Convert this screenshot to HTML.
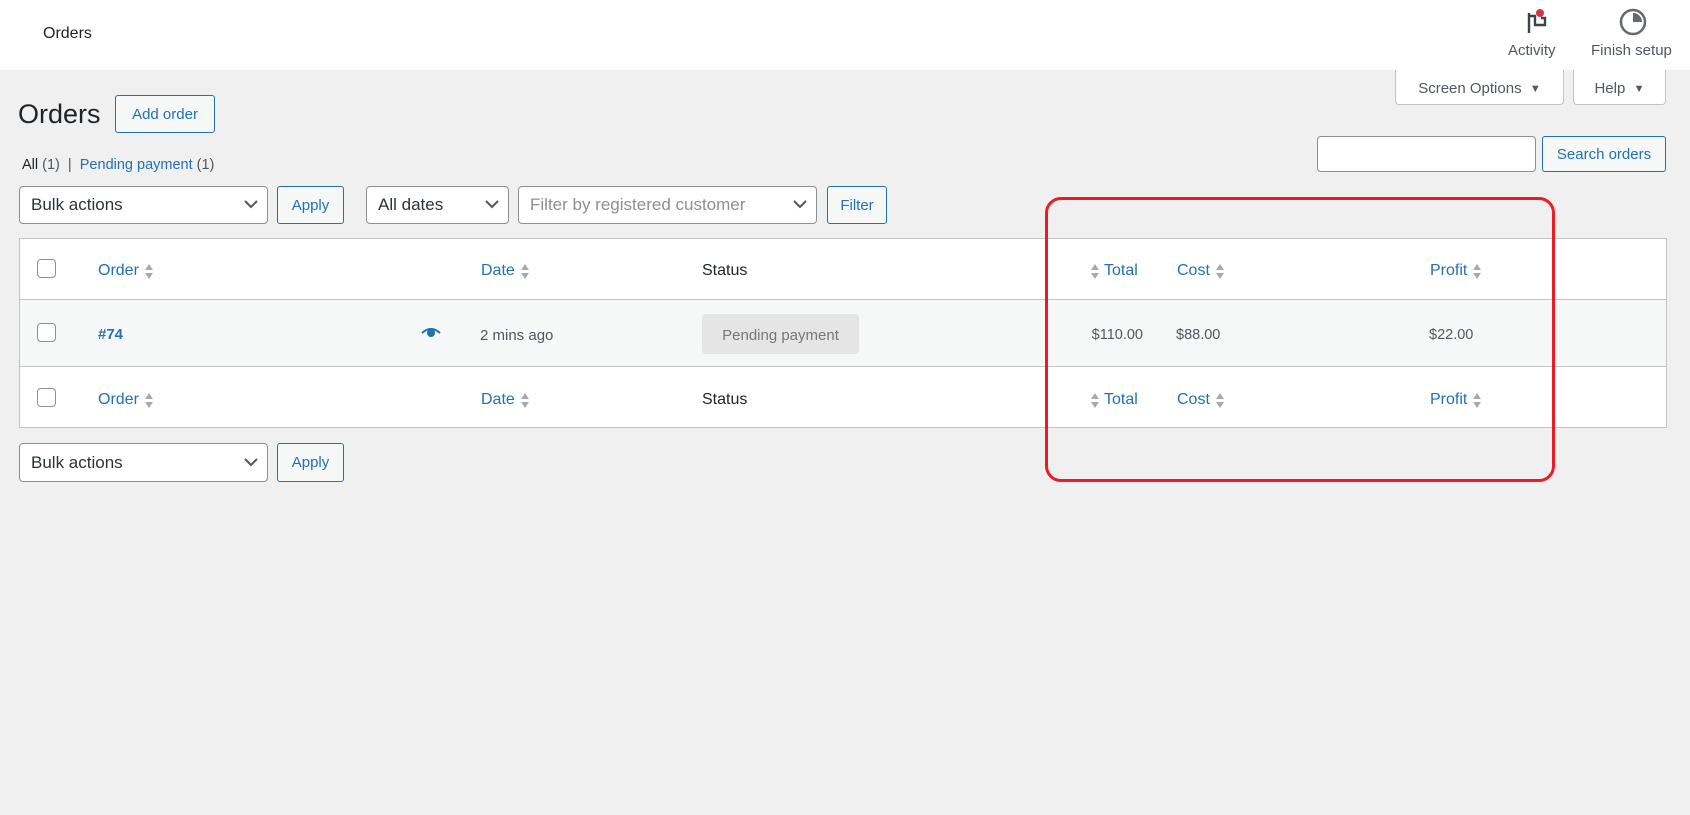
<!DOCTYPE html>
<html><head><meta charset="utf-8"><style>
*{box-sizing:border-box;margin:0;padding:0}
body{width:1690px;height:815px;background:#f0f0f1;font-family:"Liberation Sans",sans-serif;color:#1d2327;font-size:14px;position:relative;overflow:hidden}
.a{position:absolute}
.hdr{left:0;top:0;width:1690px;height:70px;background:#fff}
.btn{position:absolute;border:1px solid #2271b1;color:#2271b1;background:#f6f7f7;border-radius:3px;display:flex;align-items:center;justify-content:center;font-size:15px}
.sel{position:absolute;border:1px solid #8c8f94;background:#fff;border-radius:4px;font-size:17px;display:flex;align-items:center;padding-left:11px;color:#2c3338}
.sel svg{position:absolute;right:9px;top:50%;margin-top:-5px}
.tab{position:absolute;background:#fff;border:1px solid #c3c4c7;border-top:none;border-radius:0 0 4px 4px;color:#50575e;font-size:15px;display:flex;align-items:center;justify-content:center;padding-top:3px}
.cb{position:absolute;width:19px;height:19px;border:1px solid #8c8f94;border-radius:4px;background:#fff}
.th{position:absolute;font-size:16px;color:#2271b1;display:flex;align-items:center}
.ar{display:inline-block;width:10px;margin-left:5px}
.td{position:absolute;font-size:14.5px;color:#50575e}
</style></head><body>
<div class="a hdr"></div>
<div class="a" style="left:43px;top:25px;font-size:16px;color:#1d2327">Orders</div>
<svg class="a" style="left:1525px;top:7px" width="24" height="28" viewBox="0 0 24 28"><path d="M4 6v20M4 9h6v9h10V11h-4" fill="none" stroke="#3c434a" stroke-width="2.4"/><circle cx="15" cy="6" r="4" fill="#d63638"/></svg>
<div class="a" style="left:1508px;top:42px;font-size:15px;color:#50575e">Activity</div>
<svg class="a" style="left:1619px;top:8px" width="28" height="28" viewBox="0 0 28 28"><circle cx="14" cy="14" r="12" fill="none" stroke="#646970" stroke-width="2.5"/><path d="M14 5a9 9 0 0 1 9 9h-9z" fill="#646970"/></svg>
<div class="a" style="left:1591px;top:42px;font-size:15px;color:#50575e">Finish setup</div>
<div class="tab" style="left:1395px;top:70px;width:169px;height:35px">Screen Options&nbsp;&nbsp;<span style="font-size:11px">▼</span></div>
<div class="tab" style="left:1573px;top:70px;width:93px;height:35px">Help&nbsp;&nbsp;<span style="font-size:11px">▼</span></div>
<div class="a" style="left:18px;top:99px;font-size:27px;color:#1d2327">Orders</div>
<div class="btn" style="left:115px;top:95px;width:100px;height:38px">Add order</div>
<div class="a" style="left:22px;top:157px;font-size:14.5px;color:#50575e"><b style="color:#1d2327;font-weight:normal">All</b> (1) &nbsp;|&nbsp; <span style="color:#2271b1">Pending payment</span> (1)</div>
<div class="a" style="left:1317px;top:136px;width:219px;height:36px;background:#fff;border:1px solid #8c8f94;border-radius:4px"></div>
<div class="btn" style="left:1542px;top:136px;width:124px;height:36px">Search orders</div>
<div class="sel" style="left:19px;top:186px;width:249px;height:38px">Bulk actions<svg width="14" height="9"><path d="M1 1l6 6 6-6" fill="none" stroke="#50575e" stroke-width="2"/></svg></div>
<div class="btn" style="left:277px;top:186px;width:67px;height:38px">Apply</div>
<div class="sel" style="left:366px;top:186px;width:143px;height:38px">All dates<svg width="14" height="9"><path d="M1 1l6 6 6-6" fill="none" stroke="#50575e" stroke-width="2"/></svg></div>
<div class="sel" style="left:518px;top:186px;width:299px;height:38px;color:#8c8f94">Filter by registered customer<svg width="14" height="9"><path d="M1 1l6 6 6-6" fill="none" stroke="#50575e" stroke-width="2"/></svg></div>
<div class="btn" style="left:827px;top:186px;width:60px;height:38px">Filter</div>

<div class="a" style="left:19px;top:238px;width:1648px;height:190px;background:#fff;border:1px solid #c3c4c7"></div>
<div class="a" style="left:20px;top:299px;width:1646px;height:68px;background:#f6f7f7;border-top:1px solid #c3c4c7;border-bottom:1px solid #c3c4c7"></div>

<div class="cb" style="left:37px;top:259px"></div>
<div class="cb" style="left:37px;top:323px"></div>
<div class="cb" style="left:37px;top:388px"></div>

<svg width="0" height="0" style="position:absolute"><defs><g id="s"><path d="M5 0L9 6H1z" fill="#a7aaad"/><path d="M1 9h8L5 15z" fill="#a7aaad"/></g></defs></svg>

<div class="th" style="left:98px;top:262px">Order<svg class="ar" width="10" height="15"><use href="#s"/></svg></div>
<div class="th" style="left:481px;top:262px">Date<svg class="ar" width="10" height="15"><use href="#s"/></svg></div>
<div class="th" style="left:702px;top:262px;color:#1d2327">Status</div>
<div class="th" style="left:1090px;top:262px"><svg width="10" height="15" style="margin-right:4px"><use href="#s"/></svg>Total</div>
<div class="th" style="left:1177px;top:262px">Cost<svg class="ar" width="10" height="15"><use href="#s"/></svg></div>
<div class="th" style="left:1430px;top:262px">Profit<svg class="ar" width="10" height="15"><use href="#s"/></svg></div>

<div class="th" style="left:98px;top:391px">Order<svg class="ar" width="10" height="15"><use href="#s"/></svg></div>
<div class="th" style="left:481px;top:391px">Date<svg class="ar" width="10" height="15"><use href="#s"/></svg></div>
<div class="th" style="left:702px;top:391px;color:#1d2327">Status</div>
<div class="th" style="left:1090px;top:391px"><svg width="10" height="15" style="margin-right:4px"><use href="#s"/></svg>Total</div>
<div class="th" style="left:1177px;top:391px">Cost<svg class="ar" width="10" height="15"><use href="#s"/></svg></div>
<div class="th" style="left:1430px;top:391px">Profit<svg class="ar" width="10" height="15"><use href="#s"/></svg></div>

<div class="a" style="left:98px;top:326px;font-size:15px;font-weight:bold;color:#2271b1">#74</div>
<svg class="a" style="left:421px;top:328px" width="20" height="10" viewBox="0 0 20 10"><path d="M1 5Q10-3 19 5" fill="none" stroke="#2271b1" stroke-width="2"/><circle cx="10" cy="5" r="4" fill="#2271b1"/></svg>
<div class="td" style="left:480px;top:327px;color:#50575e;font-size:15px">2 mins ago</div>
<div class="a" style="left:702px;top:314px;width:157px;height:40px;background:#e5e5e5;border-radius:4px;color:#777;font-size:15px;display:flex;align-items:center;justify-content:center;padding-top:2px">Pending payment</div>
<div class="td" style="left:1063px;top:327px;width:80px;text-align:right">$110.00</div>
<div class="td" style="left:1176px;top:327px">$88.00</div>
<div class="td" style="left:1429px;top:327px">$22.00</div>

<div class="sel" style="left:19px;top:443px;width:249px;height:39px">Bulk actions<svg width="14" height="9"><path d="M1 1l6 6 6-6" fill="none" stroke="#50575e" stroke-width="2"/></svg></div>
<div class="btn" style="left:277px;top:443px;width:67px;height:39px">Apply</div>

<div class="a" style="left:1045px;top:197px;width:510px;height:285px;border:3.5px solid #ec1c24;border-radius:16px"></div>
</body></html>
